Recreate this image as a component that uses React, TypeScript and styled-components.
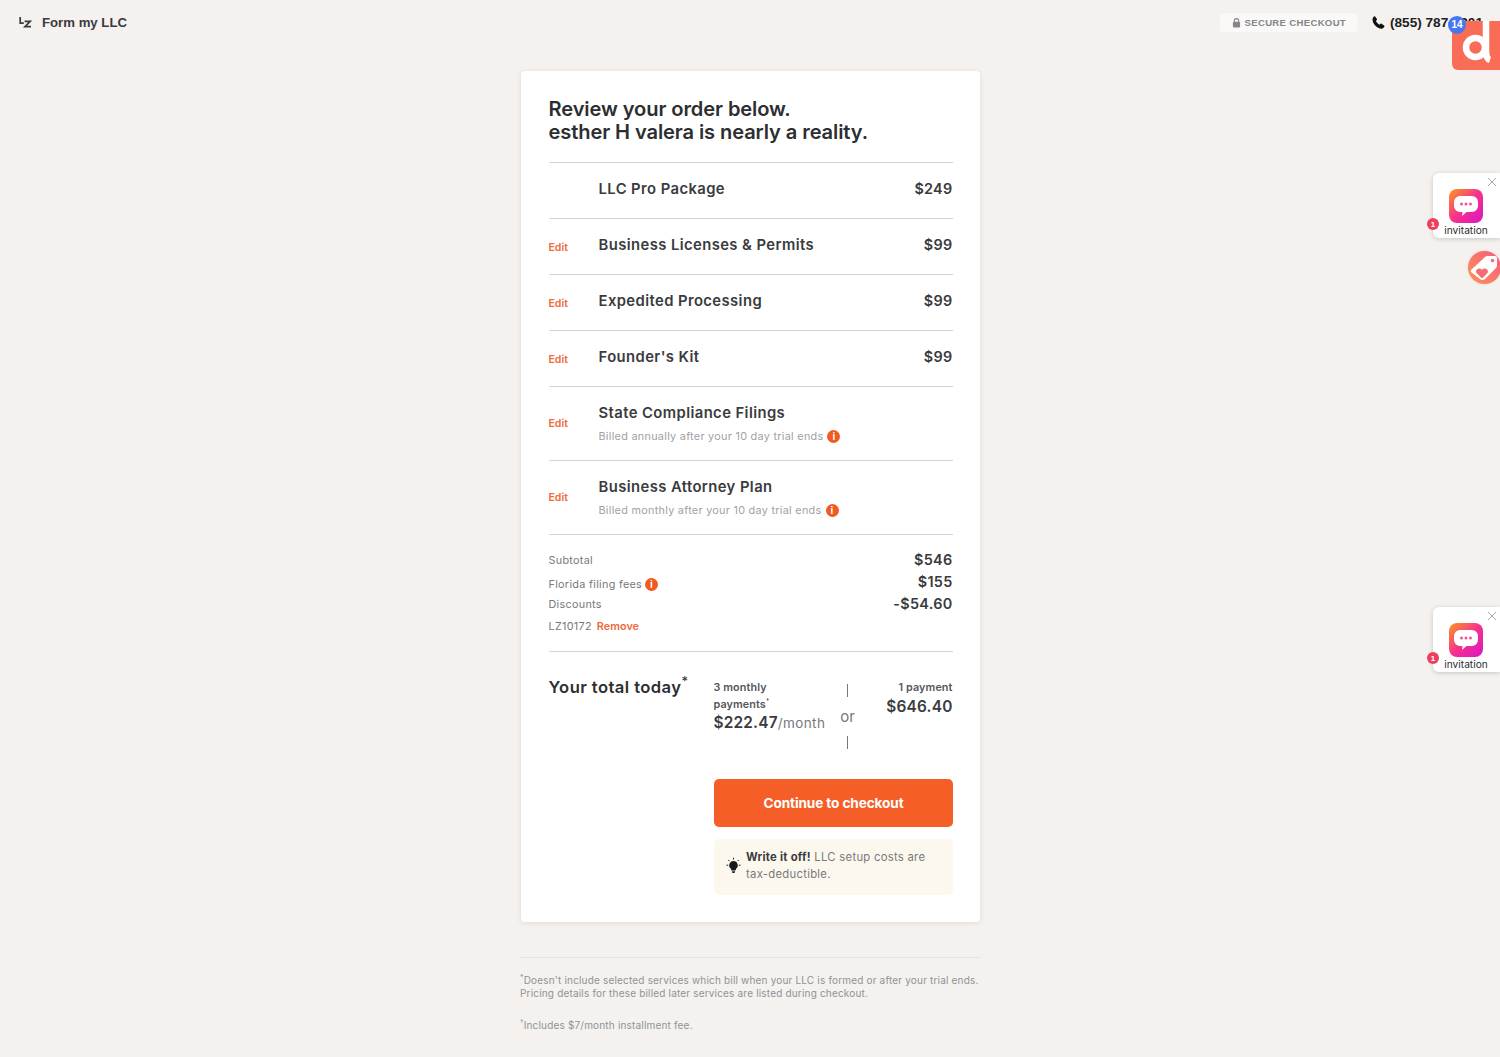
import styled, { createGlobalStyle } from 'styled-components';

const GlobalStyle = createGlobalStyle`
  * {
    box-sizing: border-box;
  }

  html,
  body {
    margin: 0;
    background: #f4f1ee;
    font-family: Inter, "Liberation Sans", sans-serif;
    color: #2b2c2f;
  }
`;

const Page = styled.div`
  position: relative;
  width: 1500px;
  height: 1057px;
  overflow: hidden;
  display: flex;
  flex-flow: column nowrap;
`;

const Header = styled.header`
  height: 71px;
  flex: 0 0 71px;
  display: flex;
  align-items: flex-start;
  justify-content: space-between;
  padding: 13px 17px 0 19px;
`;

const Brand = styled.div`
  display: flex;
  align-items: center;
  gap: 10px;
  height: 19px;
  font-family: "Liberation Sans", sans-serif;
  font-size: 13.2px;
  font-weight: 700;
  color: #3a3b3e;
`;

const HeaderRight = styled.div`
  display: flex;
  align-items: center;
  gap: 15px;
`;

const SecureBadge = styled.div`
  display: flex;
  align-items: center;
  gap: 4px;
  height: 19px;
  padding: 0 11px 0 12px;
  border-radius: 4px;
  background: #faf9f8;
  font-family: "Liberation Sans", sans-serif;
  font-size: 9.6px;
  font-weight: 700;
  letter-spacing: 0.3px;
  color: #85868a;
`;

const Phone = styled.div`
  display: flex;
  align-items: center;
  gap: 5px;
  font-family: "Liberation Sans", sans-serif;
  font-size: 13.6px;
  font-weight: 700;
  color: #202124;
`;

const Card = styled.main`
  width: 459px;
  height: 851px;
  margin-left: 521px;
  padding: 27px 27.5px 0;
  background: #fff;
  border-radius: 4px;
  box-shadow: 0 1px 5px rgba(60, 50, 40, 0.1);
`;

const Title = styled.h1`
  margin: 0;
  height: 64px;
  font-size: 20.1px;
  line-height: 23px;
  font-weight: 600;
  letter-spacing: -0.1px;
  color: #2d2e31;
`;

const ItemRow = styled.div<{ $tall?: boolean }>`
  height: ${(p) => (p.$tall ? 74 : 56)}px;
  border-top: 1px solid #d4d4d6;
  display: flex;
  align-items: ${(p) => (p.$tall ? 'center' : 'flex-start')};
  padding-top: ${(p) => (p.$tall ? 0 : 17)}px;
`;

const EditSlot = styled.div<{ $tall?: boolean }>`
  flex: 0 0 50px;
  padding-top: ${(p) => (p.$tall ? 0 : 5)}px;
  font-size: 10.5px;
  line-height: 13px;
  font-weight: 600;
  color: #ee6a3c;
`;

const ItemBody = styled.div`
  flex: 1 1 auto;
`;

const ItemName = styled.div`
  font-size: 14.8px;
  line-height: 18px;
  font-weight: 600;
  letter-spacing: 0.42px;
  color: #3a3b3e;
`;

const ItemNote = styled.div`
  display: flex;
  align-items: center;
  gap: 4px;
  margin-top: 8px;
  font-size: 10.8px;
  line-height: 14px;
  letter-spacing: 0.3px;
  color: #a0a1a4;
`;

const ItemPrice = styled.div`
  font-size: 14.4px;
  line-height: 18px;
  font-weight: 600;
  letter-spacing: 0.3px;
  color: #3a3b3e;
`;

const InfoDot = styled.span`
  flex: 0 0 13px;
  width: 13px;
  height: 13px;
  border-radius: 50%;
  background: #f15b22;
  color: #fff;
  font-family: "Liberation Sans", sans-serif;
  font-size: 10px;
  line-height: 13px;
  font-weight: 700;
  text-align: center;
`;

const Summary = styled.section`
  height: 117px;
  border-top: 1px solid #d4d4d6;
  padding-top: 14px;
`;

const SummaryRow = styled.div`
  height: 22px;
  display: flex;
  align-items: center;
  justify-content: space-between;
`;

const SummaryLabel = styled.div<{ $drop?: number }>`
  display: flex;
  align-items: center;
  gap: 3px;
  margin-top: ${(p) => p.$drop ?? 0}px;
  font-size: 10.8px;
  letter-spacing: 0.3px;
  color: #77787c;
`;

const SummaryValue = styled.div`
  padding-bottom: 2px;
  font-size: 14.4px;
  font-weight: 600;
  letter-spacing: 0.3px;
  color: #3a3b3e;
`;

const RemoveLink = styled.span`
  margin-left: 2px;
  font-weight: 600;
  letter-spacing: 0.05px;
  color: #ee6a3c;
`;

const TotalBlock = styled.section`
  border-top: 1px solid #d4d4d6;
  display: flex;
  align-items: flex-start;
  height: 128px;
  padding-top: 24px;
`;

const TotalTitle = styled.div`
  flex: 0 0 165px;
  font-size: 16.6px;
  line-height: 22px;
  font-weight: 600;
  letter-spacing: 0.42px;
  color: #2d2e31;

  sup {
    font-size: 13px;
    font-weight: 400;
    line-height: 0;
  }
`;

const Monthly = styled.div`
  flex: 0 0 112px;
  padding-top: 4px;
`;

const PlanLabel = styled.div<{ $narrow?: boolean }>`
  max-width: ${(p) => (p.$narrow ? '80px' : 'none')};
  font-size: 10.8px;
  line-height: 16.5px;
  font-weight: 600;
  letter-spacing: 0.1px;
  color: #55565a;

  sup {
    font-size: 6px;
    line-height: 0;
  }
`;

const PlanPrice = styled.div`
  font-size: 15.4px;
  line-height: 20px;
  font-weight: 600;
  letter-spacing: 0.2px;
  white-space: nowrap;
  color: #3a3b3e;

  span {
    font-size: 13.5px;
    font-weight: 400;
    letter-spacing: 0.4px;
    color: #77787c;
  }
`;

const OrColumn = styled.div`
  flex: 0 0 44px;
  padding-top: 8px;
  display: flex;
  flex-flow: column nowrap;
  align-items: center;
  font-size: 15px;
  color: #77787c;
`;

const OrTick = styled.i`
  display: block;
  width: 1px;
  height: 13px;
  background: #77787c;
`;

const OrWord = styled.span`
  display: block;
  line-height: 39px;
`;

const SinglePay = styled.div`
  flex: 1 1 auto;
  padding-top: 4px;
  text-align: right;
`;

const ActionColumn = styled.div`
  width: 239px;
  margin-left: 165.5px;
`;

const CheckoutButton = styled.button`
  display: block;
  width: 100%;
  height: 48px;
  border: 0;
  border-radius: 5px;
  background: #f55f27;
  color: #fff;
  font-family: Inter, "Liberation Sans", sans-serif;
  font-size: 13.6px;
  font-weight: 700;
  letter-spacing: -0.1px;
`;

const TipBox = styled.div`
  margin-top: 12px;
  height: 56px;
  padding: 0 20px 3px 12px;
  display: flex;
  align-items: center;
  gap: 5px;
  border-radius: 5px;
  background: #fdf8ee;
  font-size: 11.3px;
  line-height: 16.5px;
  letter-spacing: 0.27px;
  color: #77787c;

  b {
    font-weight: 700;
    letter-spacing: 0.25px;
    color: #3a3b3e;
  }
`;

const Footnotes = styled.footer`
  width: 461px;
  margin: 35px 0 0 520px;
  padding-top: 16px;
  border-top: 1px solid #e6e3e0;
  font-size: 10px;
  line-height: 13.3px;
  letter-spacing: 0.18px;
  color: #929294;

  p {
    margin: 0 0 18px;
    white-space: nowrap;
  }

  sup {
    font-size: 7px;
    line-height: 0;
  }
`;

const DealBadge = styled.div`
  position: absolute;
  top: 21px;
  right: 0;
  width: 48px;
  height: 49px;
  overflow: hidden;
  border-radius: 6px 0 0 6px;
  background: #f96c55;
`;

const CountBubble = styled.div`
  position: absolute;
  top: 16px;
  left: 1448px;
  width: 18px;
  height: 18px;
  border-radius: 50%;
  background: #4578ee;
  color: #fff;
  font-family: "Liberation Sans", sans-serif;
  font-size: 10px;
  line-height: 18px;
  font-weight: 700;
  text-align: center;
`;

const InviteCard = styled.div<{ $top: number }>`
  position: absolute;
  top: ${(p) => p.$top}px;
  left: 1433px;
  width: 67px;
  height: 65px;
  border-radius: 6px 0 0 6px;
  background: #fff;
  box-shadow: 0 1px 5px rgba(0, 0, 0, 0.18);
  display: flex;
  flex-flow: column nowrap;
  align-items: center;
  padding: 16px 1px 0 0;
  font-family: Inter, sans-serif;
  font-size: 10.2px;
  line-height: 13px;
  color: #2c2c2c;
`;

const InviteLabel = styled.span`
  margin-top: 1px;
`;

const InviteClose = styled.svg`
  position: absolute;
  top: 4px;
  right: 3px;
`;

const InviteDot = styled.div`
  position: absolute;
  left: -6px;
  top: 45px;
  width: 12px;
  height: 12px;
  border-radius: 50%;
  background: #ee3f5f;
  color: #fff;
  font-family: "Liberation Sans", sans-serif;
  font-size: 8px;
  line-height: 14px;
  font-weight: 700;
  text-align: center;
`;

const TagBubble = styled.div`
  position: absolute;
  top: 251px;
  left: 1468px;
  width: 33px;
  height: 33px;
  border-radius: 50%;
  background: linear-gradient(45deg, #fb9454, #f8587f);
  box-shadow: 0 0 3px rgba(0, 0, 0, 0.12);
`;

const LogoMark = () => (
  <svg width="13" height="11" viewBox="0 0 13 11" fill="none" stroke="#3a3b3e" strokeWidth="1.7">
    <path d="M1.2 0v6.2h3.6" />
    <path d="M5.6 4.4h5.6L6 9.6h6" />
  </svg>
);

const LockIcon = () => (
  <svg width="9" height="10" viewBox="0 0 10 11">
    <path d="M2.6 4.4V3a2.4 2.4 0 0 1 4.8 0v1.4" fill="none" stroke="#85868a" strokeWidth="1.2" />
    <rect x="1" y="4.2" width="8" height="6.3" rx="1.2" fill="#85868a" />
  </svg>
);

const PhoneIcon = () => (
  <svg width="13" height="13" viewBox="0 0 13 13">
    <path
      d="M3.1.4 4.9 3c.2.4.2.8-.1 1.100l-.9 1c.7 1.500 2 2.800 3.500 3.600l1-.9c.3-.3.8-.4 1.100-.1l2.600 1.800c.4.300.5.800.2 1.200-.7 1-1.500 2.100-2.800 2-4.500-.4-8.600-4.500-9-9C.4 2.400 1.500 1.100 2 .6c.3-.4.800-.5 1.100-.2z"
      fill="#111"
    />
  </svg>
);

const BulbIcon = () => (
  <svg width="15" height="17" viewBox="0 0 15 17" style={{ flex: '0 0 15px' }}>
    <path d="M7.500 4a4.300 4.300 0 0 0-2.600 7.700l.6 1.800h4l.6-1.800A4.300 4.300 0 0 0 7.500 4z" fill="#17181a" />
    <path d="M5.900 14.300h3.200l-.6 1.800H6.500z" fill="#17181a" />
    <path
      d="M7.500.8v1.700M2.300 3l1.100 1.100M12.700 3l-1.100 1.100M.5 8.200h1.700M12.800 8.200h1.700"
      stroke="#17181a"
      strokeWidth="1"
    />
  </svg>
);

const ChatIcon = ({ id }: { id: string }) => (
  <svg width="34" height="34" viewBox="0 0 34 34">
    <defs>
      <linearGradient id={id} x1="0" y1="0" x2="1" y2="1">
        <stop offset="0" stopColor="#fb9a1e" />
        <stop offset="0.5" stopColor="#f7318b" />
        <stop offset="1" stopColor="#d916c4" />
      </linearGradient>
    </defs>
    <rect width="34" height="34" rx="8" fill={`url(#${id})`} />
    <path
      d="M11 7h12a6 6 0 0 1 6 6v4a6 6 0 0 1-6 6h-5.500l-4.500 4 .5-4H11a6 6 0 0 1-6-6v-4a6 6 0 0 1 6-6z"
      fill="#fff"
    />
    <circle cx="12.500" cy="15" r="1.500" fill="#f0559a" />
    <circle cx="17" cy="15" r="1.500" fill="#f0559a" />
    <circle cx="21.500" cy="15" r="1.500" fill="#f0559a" />
  </svg>
);

const Invitation = ({ top, id }: { top: number; id: string }) => (
  <InviteCard $top={top}>
    <InviteClose width="10" height="10" viewBox="0 0 10 10" stroke="#a8a8a8" strokeWidth="1">
      <path d="M1 1l8 8M9 1 1 9" />
    </InviteClose>
    <ChatIcon id={id} />
    <InviteDot>1</InviteDot>
    <InviteLabel>invitation</InviteLabel>
  </InviteCard>
);

const items = [
  { name: 'LLC Pro Package', price: '$249', editable: false },
  { name: 'Business Licenses & Permits', price: '$99', editable: true },
  { name: 'Expedited Processing', price: '$99', editable: true },
  { name: "Founder's Kit", price: '$99', editable: true },
];

const billedLater = [
  { name: 'State Compliance Filings', note: 'Billed annually after your 10 day trial ends' },
  { name: 'Business Attorney Plan', note: 'Billed monthly after your 10 day trial ends' },
];

const App = () => (
  <Page>
    <GlobalStyle />
    <Header>
      <Brand>
        <LogoMark />
        Form my LLC
      </Brand>
      <HeaderRight>
        <SecureBadge>
          <LockIcon />
          SECURE CHECKOUT
        </SecureBadge>
        <Phone>
          <PhoneIcon />
          (855) 787-1901
        </Phone>
      </HeaderRight>
    </Header>

    <Card>
      <Title>
        Review your order below.
        <br />
        esther H valera is nearly a reality.
      </Title>

      {items.map((item) => (
        <ItemRow key={item.name}>
          <EditSlot>{item.editable && 'Edit'}</EditSlot>
          <ItemBody>
            <ItemName>{item.name}</ItemName>
          </ItemBody>
          <ItemPrice>{item.price}</ItemPrice>
        </ItemRow>
      ))}

      {billedLater.map((item) => (
        <ItemRow $tall key={item.name}>
          <EditSlot $tall>Edit</EditSlot>
          <ItemBody>
            <ItemName>{item.name}</ItemName>
            <ItemNote>
              {item.note}
              <InfoDot>i</InfoDot>
            </ItemNote>
          </ItemBody>
        </ItemRow>
      ))}

      <Summary>
        <SummaryRow>
          <SummaryLabel>Subtotal</SummaryLabel>
          <SummaryValue>$546</SummaryValue>
        </SummaryRow>
        <SummaryRow>
          <SummaryLabel $drop={4}>
            Florida filing fees <InfoDot>i</InfoDot>
          </SummaryLabel>
          <SummaryValue>$155</SummaryValue>
        </SummaryRow>
        <SummaryRow>
          <SummaryLabel>Discounts</SummaryLabel>
          <SummaryValue>-$54.60</SummaryValue>
        </SummaryRow>
        <SummaryRow>
          <SummaryLabel>
            LZ10172 <RemoveLink>Remove</RemoveLink>
          </SummaryLabel>
        </SummaryRow>
      </Summary>

      <TotalBlock>
        <TotalTitle>
          Your total today<sup>*</sup>
        </TotalTitle>
        <Monthly>
          <PlanLabel $narrow>
            3 monthly payments<sup>†</sup>
          </PlanLabel>
          <PlanPrice>
            $222.47<span>/month</span>
          </PlanPrice>
        </Monthly>
        <OrColumn>
          <OrTick />
          <OrWord>or</OrWord>
          <OrTick />
        </OrColumn>
        <SinglePay>
          <PlanLabel>1 payment</PlanLabel>
          <PlanPrice>$646.40</PlanPrice>
        </SinglePay>
      </TotalBlock>

      <ActionColumn>
        <CheckoutButton type="button">Continue to checkout</CheckoutButton>
        <TipBox>
          <BulbIcon />
          <div>
            <b>Write it off!</b> LLC setup costs are tax-deductible.
          </div>
        </TipBox>
      </ActionColumn>
    </Card>

    <Footnotes>
      <p>
        <sup>*</sup>Doesn't include selected services which bill when your LLC is formed or after your trial ends.
        <br />
        Pricing details for these billed later services are listed during checkout.
      </p>
      <p>
        <sup>†</sup>Includes $7/month installment fee.
      </p>
    </Footnotes>

    <DealBadge>
      <svg width="48" height="49" viewBox="0 0 48 49" fill="none" stroke="#fff" strokeWidth="6.500">
        <circle cx="23.500" cy="26.500" r="9.500" />
        <path d="M34 0v30c0 5 1 8 4 9" />
      </svg>
    </DealBadge>
    <CountBubble>14</CountBubble>
    <Invitation top={173} id="chat-a" />
    <TagBubble>
      <svg width="33" height="33" viewBox="0 0 33 33">
        <path
          d="M3 19 17 6q1-1 3-1h7q2 0 2 2v7q0 2-1 3L17 28q-3 2-5 0l-9-7q-1-1 0-2z"
          fill="#fff"
        />
        <circle cx="24.500" cy="9.500" r="1.800" fill="#f8687a" />
        <path d="M14 27.500 8.500 22c-2-3.500 3-6.500 5.500-3 2.500-3.500 7.500-.5 5.500 3z" fill="#f86a72" />
      </svg>
    </TagBubble>
    <Invitation top={607} id="chat-b" />
  </Page>
);

export default App;
